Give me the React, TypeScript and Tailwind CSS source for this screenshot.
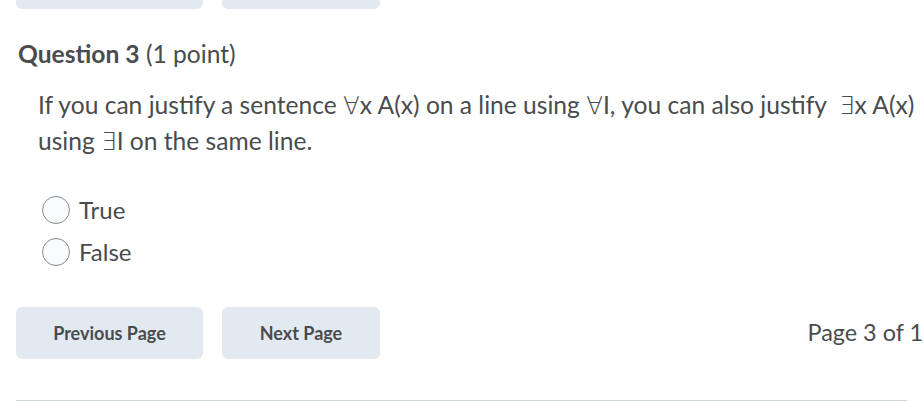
import React from 'react';

const font = { fontFamily: 'Lato, "Noto Sans", sans-serif' };
const symFont = { fontFamily: '"DejaVu Sans", sans-serif' };

const Sym: React.FC<{ c: string }> = ({ c }) => (
  <span className="font-extralight leading-none" style={symFont}>
    {c}
  </span>
);

const Radio: React.FC<{ label: string }> = ({ label }) => (
  <label className="flex items-center h-[42px] gap-[9px] cursor-pointer">
    <span className="w-[28px] h-[28px] rounded-full border border-[#868c8f] bg-[#f9fbff] shrink-0" />
    <span className="text-[24px] leading-[30px] text-[#494c4e]">{label}</span>
  </label>
);

const NavButton: React.FC<{ label: string; width: string }> = ({ label, width }) => (
  <button
    className={`${width} h-[52px] rounded-[6px] bg-[#e3e9f1] text-[18px] font-bold text-[#494c4e] flex items-center justify-center`}
  >
    {label}
  </button>
);

export default function App() {
  return (
    <div className="w-[923px] h-[402px] overflow-hidden bg-white" style={font}>
      <div className="px-4">
        {/* buttons of the previous question, mostly scrolled off */}
        <div className="flex gap-[19px] -mt-[43px]">
          <NavButton label="" width="w-[187px]" />
          <NavButton label="" width="w-[158px]" />
        </div>

        <h2 className="mt-[31px] text-[24.6px] leading-[28px] text-[#494c4e] pl-[2px] whitespace-nowrap">
          <span className="font-bold">Question 3</span> (1 point)
        </h2>

        <p className="mt-[19px] pl-[22px] text-[24.6px] leading-[36px] text-[#494c4e] whitespace-nowrap">
          If you can justify a sentence <Sym c="∀" />x A(x) on a line using <Sym c="∀" />I, you can also justify &nbsp;<Sym c="∃" />x A(x)
          <br />
          using <Sym c="∃" />I on the same line.
        </p>

        <div className="mt-[30px] pl-[26px] flex flex-col">
          <Radio label="True" />
          <Radio label="False" />
        </div>

        <div className="mt-[34px] flex items-center">
          <div className="flex gap-[19px]">
            <NavButton label="Previous Page" width="w-[187px]" />
            <NavButton label="Next Page" width="w-[158px]" />
          </div>
          <span className="ml-auto -mr-4 text-[23.4px] text-[#494c4e] whitespace-nowrap">Page 3 of 1</span>
        </div>

        <div className="mt-[41px] h-px bg-[#cdd5dc]" />
      </div>
    </div>
  );
}
